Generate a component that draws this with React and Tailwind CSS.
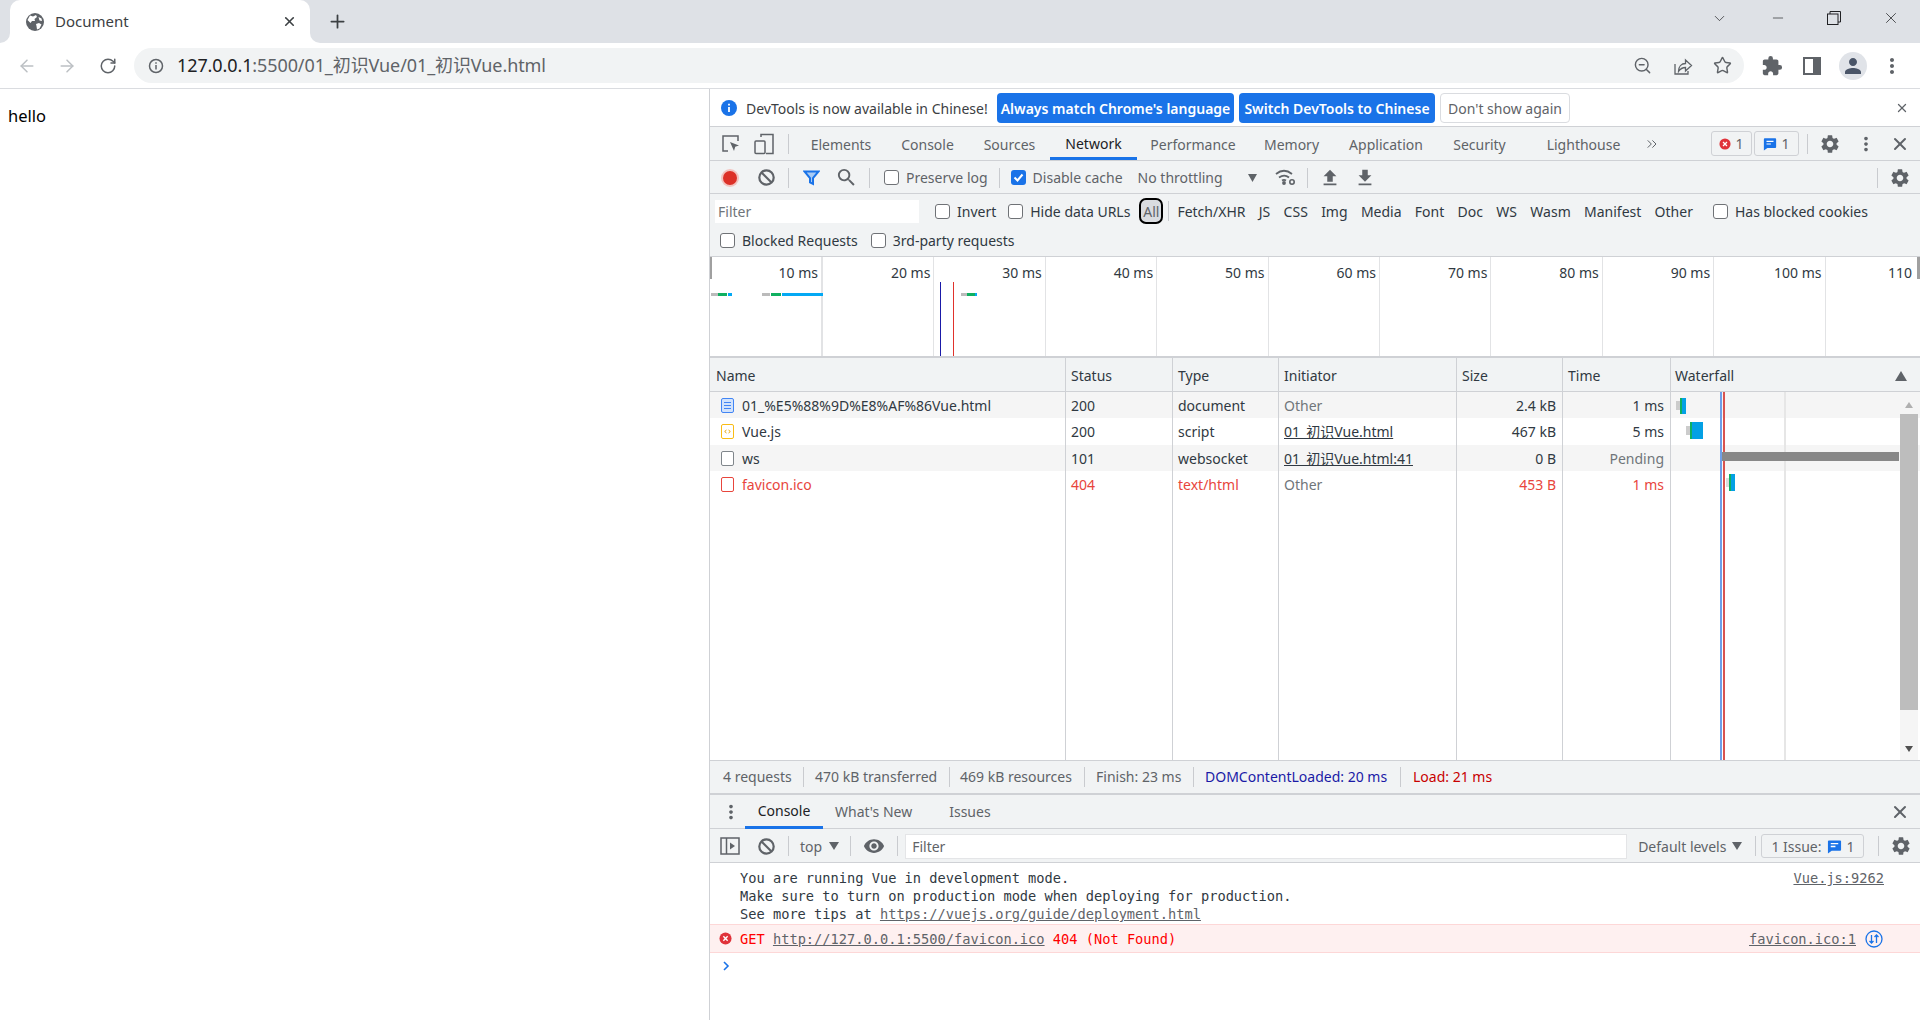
import { ArrowLeft, ArrowRight, ChevronDown, ChevronsRight, Minus, Plus, RotateCw, Star, X, ZoomOut } from "lucide-react"
import { MdExtension, MdFileDownload, MdFileUpload, MdMoreVert, MdPerson, MdSearch, MdSettings, MdVisibility } from "react-icons/md"

const Sep = ({ className = "" }) => <div className={"w-px h-[20px] bg-[#c9cbcf] shrink-0 " + className} />

const Check = ({ label, className = "", checked = false }) => (
  <label className={"flex items-center gap-[7px] shrink-0 " + className}>
    <span className={checked ? "w-[15px] h-[15px] rounded-[3px] bg-[#1a73e8] flex items-center justify-center" : "w-[15px] h-[15px] rounded-[3px] border border-[#6f7276] bg-white"}>
      {checked && (
        <svg width="13" height="13" viewBox="0 0 13 13" fill="none" stroke="white" strokeWidth="2"><path d="M2.5 6.5l3 3 5-6" /></svg>
      )}
    </span>
    <span>{label}</span>
  </label>
)

const Message = ({ size = 16 }) => (
  <svg width={size} height={size} viewBox="0 0 16 16">
    <path d="M2 1.5h12a1 1 0 0 1 1 1v9a1 1 0 0 1-1 1H5l-4 3v-13a1 1 0 0 1 1-1z" fill="#1a73e8" />
    <path d="M4 5h8M4 8h5" stroke="white" strokeWidth="1.4" />
  </svg>
)

const ErrorDot = ({ size = 14 }) => (
  <svg width={size} height={size} viewBox="0 0 14 14">
    <circle cx="7" cy="7" r="6.5" fill="#e0323a" />
    <path d="M4.7 4.7l4.6 4.6M9.3 4.7l-4.6 4.6" stroke="white" strokeWidth="1.5" />
  </svg>
)

const Clear = ({ className = "" }) => (
  <svg width="17" height="17" viewBox="0 0 17 17" fill="none" stroke="#5f6368" strokeWidth="2.200" className={className}>
    <circle cx="8.500" cy="8.500" r="7.200" />
    <path d="M3.500 3.500l10 10" />
  </svg>
)

const Globe = () => (
  <svg width="18" height="18" viewBox="0 0 18 18">
    <circle cx="9" cy="9" r="9" fill="#5f6368" />
    <path d="M4 2.5l3 1 3-1.5 1 2-2.500 2 .5 2-3 0-1.500 2-3-3zM10 11l3-1 2.500 1.500-2 4-2.500 1-.5-3.500zM12.500 4l3 1.500.5 2.500-2.500-.5z" fill="white" />
  </svg>
)

const tabs = [
  ["Elements", "w-[90px]"],
  ["Console", "w-[83px]"],
  ["Sources", "w-[81px]"],
  ["Network", "w-[87px]"],
  ["Performance", "w-[112px]"],
  ["Memory", "w-[85px]"],
  ["Application", "w-[104px]"],
  ["Security", "w-[83px]"],
  ["Lighthouse", "w-[125px]"],
]

const chips = ["Fetch/XHR", "JS", "CSS", "Img", "Media", "Font", "Doc", "WS", "Wasm", "Manifest", "Other"]
const ticks = ["20 ms", "30 ms", "40 ms", "50 ms", "60 ms", "70 ms", "80 ms", "90 ms", "100 ms"]

const rowBg = (i) => (i % 2 === 0 ? "bg-[#f5f5f5]" : "bg-white")

const columns = [
  { title: "Status", width: "w-[107px]", cells: [["200"], ["200"], ["101"], ["404", "red"]] },
  { title: "Type", width: "w-[106px]", cells: [["document"], ["script"], ["websocket"], ["text/html", "red"]] },
  { title: "Initiator", width: "w-[178px]", cells: [["Other", "gray"], ["01_初识Vue.html", "link"], ["01_初识Vue.html:41", "link"], ["Other", "gray"]] },
  { title: "Size", width: "w-[106px]", right: true, cells: [["2.4 kB"], ["467 kB"], ["0 B"], ["453 B", "red"]] },
  { title: "Time", width: "w-[108px]", right: true, cells: [["1 ms"], ["5 ms"], ["Pending", "gray"], ["1 ms", "red"]] },
]

const cellTone = {
  red: "text-[#e8453c]",
  gray: "text-[#70757a]",
  link: "text-[#303942] underline",
}

const FileIcon = ({ kind }) => {
  if (kind === "doc")
    return (
      <svg width="13" height="15" viewBox="0 0 13 15" className="shrink-0">
        <rect x="0.5" y="0.5" width="12" height="14" rx="1.500" fill="#d2e3fc" stroke="#4285f4" />
        <path d="M3 4.500h7M3 7.500h7M3 10.500h7" stroke="#4285f4" strokeWidth="1.200" />
      </svg>
    )
  if (kind === "js")
    return (
      <svg width="13" height="15" viewBox="0 0 13 15" className="shrink-0">
        <rect x="0.5" y="0.5" width="12" height="14" rx="1.500" fill="white" stroke="#f9bc15" />
        <path d="M5.500 6l-1.800 1.500L5.500 9M7.500 6l1.800 1.500L7.500 9" stroke="#e8a500" fill="none" />
      </svg>
    )
  return (
    <svg width="13" height="15" viewBox="0 0 13 15" className="shrink-0">
      <rect x="0.5" y="0.5" width="12" height="14" rx="1.500" fill="white" stroke={kind === "err" ? "#e8453c" : "#80868b"} />
    </svg>
  )
}

const nameRows = [
  { name: "01_%E5%88%9D%E8%AF%86Vue.html", kind: "doc" },
  { name: "Vue.js", kind: "js" },
  { name: "ws", kind: "plain" },
  { name: "favicon.ico", kind: "err" },
]

const Browser = () => (
  <div>
    <div className="h-[43px] bg-[#dee1e6] flex items-end pl-[10px] relative">
      <div className="relative w-[300px] h-[43px] bg-white rounded-t-[10px] flex items-center pl-[16px] pr-[13px] text-[15px] text-[#3c4043]">
        <div className="absolute -left-[10px] bottom-0 w-[10px] h-[10px] bg-white"><div className="size-full bg-[#dee1e6] rounded-br-[10px]" /></div>
        <div className="absolute -right-[10px] bottom-0 w-[10px] h-[10px] bg-white"><div className="size-full bg-[#dee1e6] rounded-bl-[10px]" /></div>
        <Globe />
        <span className="ml-[11px] flex-1">Document</span>
        <X size={15} strokeWidth={2.6} className="text-[#3c4043]" />
      </div>
      <Plus size={21} strokeWidth={2} className="ml-[17px] mb-[11px] text-[#3c4043]" />
      <div className="ml-auto flex items-center h-[36px] self-start text-[#202124]">
        <ChevronDown size={17} strokeWidth={1} className="mr-[42px]" />
        <Minus size={16} strokeWidth={1} className="mr-[41px]" />
        <svg width="14" height="14" viewBox="0 0 14 14" fill="none" stroke="#202124" className="mr-[41px]">
          <rect x="0.5" y="3" width="10.500" height="10.500" />
          <path d="M3 3V.5h10.500V11H11" />
        </svg>
        <X size={18} strokeWidth={1} className="mr-[20px]" />
      </div>
    </div>
    <div className="h-[46px] bg-white border-b border-[#dadce0] flex items-center text-[#5f6368]">
      <ArrowLeft size={20} strokeWidth={1.800} className="ml-[17px] text-[#bcc0c4]" />
      <ArrowRight size={20} strokeWidth={1.800} className="ml-[20px] text-[#bcc0c4]" />
      <RotateCw size={18} strokeWidth={2} className="ml-[22px] text-[#5f6368]" />
      <div className="ml-[17px] w-[1610px] h-[35px] rounded-full bg-[#f1f3f4] flex items-center pl-[14px] relative">
        <svg width="16" height="16" viewBox="0 0 16 16" fill="none" stroke="#5f6368" strokeWidth="1.500">
          <circle cx="8" cy="8" r="6.500" />
          <path d="M8 7v4.500M8 4.200v1.600" />
        </svg>
        <span className="ml-[13px] text-[18px] text-[#5f6368] tracking-[-0.1px]">
          <span className="text-[#202124]">127.0.0.1</span>:5500/01_初识Vue/01_初识Vue.html
        </span>
        <ZoomOut size={19} strokeWidth={1.800} className="ml-auto" />
        <svg width="20" height="20" viewBox="0 0 20 20" fill="none" stroke="#5f6368" strokeWidth="1.300" className="ml-[21px]">
          <path d="M2 8v10h13v-3" />
          <path d="M5.500 15.500c0-5 3-8 7-8V4l6 5.500-6 5.500v-3.500c-3 0-5 1-7 4z" />
        </svg>
        <Star size={19} strokeWidth={1.800} className="ml-[20px] mr-[12px]" />
      </div>
      <MdExtension size={22} className="ml-[17px]" />
      <svg width="18" height="18" viewBox="0 0 18 18" className="ml-[20px]">
        <path fillRule="evenodd" d="M0 0h18v18H0zM2 2v14h8V2z" fill="#5f6368" />
      </svg>
      <div className="ml-[18px] w-[28px] h-[28px] rounded-full bg-[#e0e3e8] flex items-center justify-center"><MdPerson size={24} className="text-[#4a5568]" /></div>
      <MdMoreVert size={24} className="ml-[13px]" />
    </div>
  </div>
)

const Overview = () => (
  <div className="h-[101px] border-b-2 border-[#cfd1d5] flex relative bg-white text-[14px] text-[#303942]">
    <div className="w-[113px] border-r-2 border-[#e2e3e5] pr-[3px] pt-[5px] text-right">10 ms</div>
    {ticks.map((t) => (
      <div key={t} className="w-[111.400px] border-r border-[#e2e3e5] pr-[3px] pt-[5px] text-right">{t}</div>
    ))}
    <div className="flex-1 pr-[8px] pt-[5px] text-right">110</div>
    <div className="absolute left-0 top-0 w-[2px] h-[22px] bg-[#a0a0a0]" />
    <div className="absolute right-0 top-0 w-[3px] h-[22px] bg-[#a0a0a0]" />
    <div className="absolute left-[1px] top-[36px] w-[7px] h-[3px] bg-[#bbb]" />
    <div className="absolute left-[8px] top-[36px] w-[9px] h-[3px] bg-[#0fb060]" />
    <div className="absolute left-[18px] top-[36px] w-[4px] h-[3px] bg-[#03a9f4]" />
    <div className="absolute left-[52px] top-[36px] w-[8px] h-[3px] bg-[#bbb]" />
    <div className="absolute left-[61px] top-[36px] w-[10px] h-[3px] bg-[#0fb060]" />
    <div className="absolute left-[72px] top-[36px] w-[41px] h-[3px] bg-[#03a9f4]" />
    <div className="absolute left-[251px] top-[36px] w-[6px] h-[3px] bg-[#bbb]" />
    <div className="absolute left-[257px] top-[36px] w-[8px] h-[3px] bg-[#0fb060]" />
    <div className="absolute left-[265px] top-[36px] w-[2px] h-[3px] bg-[#03a9f4]" />
    <div className="absolute left-[230px] top-[25px] bottom-0 w-px bg-[#1a1aa8]" />
    <div className="absolute left-[243px] top-[25px] bottom-0 w-px bg-[#e0322c]" />
  </div>
)

const HeaderCell = ({ children, className = "" }) => (
  <div className={"h-[34px] bg-[#f1f3f4] border-b border-[#cfd1d5] flex items-center pt-[2px] text-[#303942] " + className}>{children}</div>
)

const Table = () => (
  <div className="flex-1 flex min-h-0 bg-white text-[14px] text-[#303942]">
    <div className="w-[356px] border-r border-[#cfd1d5]">
      <HeaderCell className="px-[6px]">Name</HeaderCell>
      {nameRows.map((r, i) => (
        <div key={r.name} className={"h-[26.250px] flex items-center pl-[11px] pt-[1px] " + rowBg(i) + (r.kind === "err" ? " text-[#e8453c]" : "")}>
          <FileIcon kind={r.kind} />
          <span className="ml-[8px]">{r.name}</span>
        </div>
      ))}
    </div>
    {columns.map((c) => (
      <div key={c.title} className={c.width + " border-r border-[#cfd1d5]"}>
        <HeaderCell className="px-[5px]">{c.title}</HeaderCell>
        {c.cells.map(([text, tone], i) => (
          <div key={i} className={"h-[26.250px] flex items-center pt-[1px] whitespace-nowrap " + rowBg(i) + (c.right ? " justify-end pr-[6px] " : " pl-[5px] ") + (cellTone[tone] || "")}>{text}</div>
        ))}
      </div>
    ))}
    <div className="flex-1 relative">
      <HeaderCell className="pl-[4px]">
        Waterfall
        <svg width="12" height="10" viewBox="0 0 12 10" className="ml-auto mr-[13px]"><path d="M6 0l6 10H0z" fill="#5f6368" /></svg>
      </HeaderCell>
      {nameRows.map((r, i) => (
        <div key={r.name} className={"h-[26.250px] " + rowBg(i)} />
      ))}
      <div className="absolute left-[113px] top-[34px] bottom-0 w-[2px] bg-[#e6e6e6]" />
      <div className="absolute left-[49px] top-[34px] bottom-0 w-[2px] bg-[#6f9fe8]" />
      <div className="absolute left-[52px] top-[34px] bottom-0 w-[2px] bg-[#d9534f]" />

      <div className="absolute left-[5px] top-[43px] w-[4px] h-[9px] bg-[#ccc]" />
      <div className="absolute left-[9px] top-[40px] w-[2px] h-[16px] bg-[#0fb060]" />
      <div className="absolute left-[11px] top-[40px] w-[4px] h-[16px] bg-[#03a0e4]" />

      <div className="absolute left-[15px] top-[68px] w-[4px] h-[9px] bg-[#ccc]" />
      <div className="absolute left-[19px] top-[64px] w-[2px] h-[17px] bg-[#0fb060]" />
      <div className="absolute left-[21px] top-[64px] w-[11px] h-[17px] bg-[#03a0e4]" />

      <div className="absolute left-[51px] top-[94px] w-[177px] h-[9px] bg-[#888]" />

      <div className="absolute left-[55px] top-[120px] w-[4px] h-[9px] bg-[#ddd]" />
      <div className="absolute left-[58px] top-[116px] w-[2px] h-[17px] bg-[#0fb060]" />
      <div className="absolute left-[60px] top-[116px] w-[4px] h-[17px] bg-[#03a0e4]" />

      <div className="absolute right-[2px] top-[34px] bottom-0 w-[18px] bg-[#f5f5f5] flex flex-col items-center">
        <svg width="8" height="6" viewBox="0 0 8 6" className="mt-[10px]"><path d="M4 0l4 6H0z" fill="#b0b0b0" /></svg>
        <div className="mt-[6px] w-[18px] h-[296px] bg-[#bdbdbd]" />
        <svg width="8" height="6" viewBox="0 0 8 6" className="mt-auto mb-[8px]"><path d="M0 0h8L4 6z" fill="#505050" /></svg>
      </div>
    </div>
  </div>
)

const Status = () => (
  <div className="h-[35px] bg-[#f1f3f4] border-t border-b-2 border-[#cfd1d5] flex items-center pl-[13px] text-[14px] text-[#5f6368] whitespace-nowrap">
    <span className="w-[80px] -mt-[2px]">4 requests</span>
    <Sep />
    <span className="w-[145px] pl-[11px] -mt-[2px]">470 kB transferred</span>
    <Sep />
    <span className="w-[134px] pl-[10px] -mt-[2px]">469 kB resources</span>
    <Sep />
    <span className="w-[108px] pl-[11px] -mt-[2px]">Finish: 23 ms</span>
    <Sep />
    <span className="w-[206px] pl-[11px] -mt-[2px] text-[#1a1aa6]">DOMContentLoaded: 20 ms</span>
    <Sep />
    <span className="pl-[12px] -mt-[2px] text-[#c80000]">Load: 21 ms</span>
  </div>
)

const Drawer = () => (
  <div className="h-[225px] flex flex-col shrink-0">
    <div className="h-[34px] bg-[#f1f3f4] border-b border-[#cfd1d5] flex items-center text-[14px] text-[#5f6368]">
      <MdMoreVert size={22} className="ml-[10px]" />
      <div className="ml-[3px] w-[78px] h-[34px] pt-[1px] border-b-[3px] border-[#1a73e8] text-[#202124] flex items-center justify-center">Console</div>
      <span className="ml-[12px]">What's New</span>
      <span className="ml-[37px]">Issues</span>
      <X size={20} strokeWidth={2.400} className="ml-auto mr-[10px]" />
    </div>
    <div className="h-[34px] bg-[#f1f3f4] border-b border-[#cfd1d5] flex items-center pt-[1px] text-[14px] text-[#5f6368]">
      <svg width="20" height="18" viewBox="0 0 20 18" fill="none" stroke="#5f6368" strokeWidth="1.500" className="ml-[10px]">
        <rect x="1" y="1" width="18" height="16" />
        <path d="M6.500 1v16" />
        <path d="M10 5.500l5 3.500-5 3.500z" fill="#5f6368" stroke="none" />
      </svg>
      <Clear className="ml-[18px]" />
      <Sep className="ml-[13px]" />
      <span className="ml-[11px]">top</span>
      <svg width="10" height="8" viewBox="0 0 10 8" className="ml-[7px]"><path d="M0 0h10L5 8z" fill="#5f6368" /></svg>
      <Sep className="ml-[11px]" />
      <MdVisibility size={22} className="ml-[12px]" />
      <Sep className="ml-[12px]" />
      <div className="ml-[7px] w-[722px] h-[25px] bg-white border border-[#e4e5e7] flex items-center pl-[6px] text-[#5f6368]">Filter</div>
      <span className="ml-[11px]">Default levels</span>
      <svg width="10" height="8" viewBox="0 0 10 8" className="ml-[6px]"><path d="M0 0h10L5 8z" fill="#5f6368" /></svg>
      <Sep className="ml-[13px]" />
      <div className="ml-[5px] w-[103px] h-[24px] rounded-[3px] border border-[#cfd1d5] flex items-center justify-center gap-[5px]">
        1 Issue: <Message size={15} /> 1
      </div>
      <Sep className="ml-[14px]" />
      <MdSettings size={22} className="ml-[11px]" />
    </div>
    <div className="flex-1 bg-white font-['DejaVu_Sans_Mono',monospace] text-[13.680px] leading-[18px] text-[#303942]">
      <div className="flex pl-[30px] pr-[36px] pt-[6px] h-[61px]">
        <div>
          <div>You are running Vue in development mode.</div>
          <div>Make sure to turn on production mode when deploying for production.</div>
          <div>See more tips at <span className="underline text-[#5f6368]">https://vuejs.org/guide/deployment.html</span></div>
        </div>
        <span className="ml-auto underline text-[#5f6368]">Vue.js:9262</span>
      </div>
      <div className="h-[29px] bg-[#fef0f0] border-y border-[#fdd7d7] flex items-center text-[#f00] pl-[9px] pr-[37px]">
        <ErrorDot size={13} />
        <span className="ml-[8px]">GET <span className="underline text-[#5f6368]">http://127.0.0.1:5500/favicon.ico</span> 404 (Not Found)</span>
        <span className="ml-auto underline text-[#5f6368]">favicon.ico:1</span>
        <svg width="18" height="18" viewBox="0 0 18 18" fill="none" stroke="#1a73e8" strokeWidth="1.300" className="ml-[9px]">
          <circle cx="9" cy="9" r="8" />
          <path d="M6.500 5v8M4.500 11l2 2 2-2M11.500 13V5M9.500 7l2-2 2 2" />
        </svg>
      </div>
      <svg width="8" height="10" viewBox="0 0 8 10" fill="none" stroke="#1a73e8" strokeWidth="1.600" className="ml-[12px] mt-[8px]"><path d="M2 1l4 4-4 4" /></svg>
    </div>
  </div>
)

const DevTools = () => (
  <div className="flex-1 min-w-0 border-l border-[#cfd1d5] flex flex-col text-[14px] text-[#303942]">
    <div className="h-[38px] bg-white border-b border-[#cfd1d5] flex items-center pl-[11px] pt-[1px] text-[14px]">
      <svg width="16" height="16" viewBox="0 0 16 16" className="shrink-0">
        <circle cx="8" cy="8" r="8" fill="#1a73e8" />
        <path d="M8 7v5M8 3.800v1.700" stroke="white" strokeWidth="1.800" />
      </svg>
      <span className="ml-[9px] w-[251px] whitespace-nowrap text-[#3c4043]">DevTools is now available in Chinese!</span>
      <button className="w-[237px] h-[30px] rounded-[4px] bg-[#1a73e8] text-white font-semibold whitespace-nowrap">Always match Chrome's language</button>
      <button className="ml-[5px] w-[196px] h-[30px] rounded-[4px] bg-[#1a73e8] text-white font-semibold whitespace-nowrap">Switch DevTools to Chinese</button>
      <button className="ml-[5px] w-[130px] h-[30px] rounded-[4px] border border-[#dadce0] text-[#5f6368] whitespace-nowrap">Don't show again</button>
      <X size={14} strokeWidth={2.200} className="ml-auto mr-[11px] text-[#5f6368]" />
    </div>

    <div className="h-[34px] bg-[#f1f3f4] border-b border-[#cfd1d5] flex items-center text-[#5f6368]">
      <svg width="20" height="20" viewBox="0 0 20 20" fill="none" stroke="#5f6368" strokeWidth="1.500" className="ml-[11px]">
        <path d="M7 17H2V2h15v5" />
        <path d="M9 8l9 3.500-3.800 1.300L13 17z" fill="#5f6368" stroke="none" />
      </svg>
      <svg width="20" height="22" viewBox="0 0 20 22" fill="none" stroke="#5f6368" strokeWidth="1.500" className="ml-[13px]">
        <path d="M7 4V1.500h12v19H12" />
        <rect x="1" y="8" width="10" height="12.500" rx="1" />
      </svg>
      <Sep className="ml-[14px] mr-[7px]" />
      {tabs.map(([t, w]) => (
        <div key={t} className={w + " h-[33px] pt-[2px] flex items-center justify-center whitespace-nowrap " + (t === "Network" ? "border-b-[3px] border-[#1a73e8] text-[#202124]" : "")}>{t}</div>
      ))}
      <ChevronsRight size={16} strokeWidth={1.500} className="-ml-[2px]" />
      <div className="ml-[51px] w-[41px] h-[25px] rounded-[3px] border border-[#cfd1d5] flex items-center justify-center gap-[4px]"><ErrorDot size={12} /> 1</div>
      <div className="ml-[2px] w-[45px] h-[25px] rounded-[3px] border border-[#cfd1d5] flex items-center justify-center gap-[4px]"><Message size={14} /> 1</div>
      <Sep className="ml-[8px]" />
      <MdSettings size={22} className="ml-[11px]" />
      <MdMoreVert size={22} className="ml-[14px]" />
      <X size={20} strokeWidth={2.400} className="ml-[13px]" />
    </div>

    <div className="h-[33px] bg-[#f1f3f4] border-b border-[#cfd1d5] flex items-center pt-[1px] text-[#5f6368]">
      <div className="ml-[13px] w-[14px] h-[14px] rounded-full bg-[#dc3128] ring-2 ring-[#f3c4c0]" />
      <Clear className="ml-[21px]" />
      <Sep className="ml-[13px]" />
      <svg width="17" height="16" viewBox="0 0 17 16" fill="none" stroke="#1a73e8" strokeWidth="2" className="ml-[14px]"><path d="M1.500 1.500h14L10 8v6l-3-1.500V8z" fill="#a8cbf5" /></svg>
      <MdSearch size={23} className="ml-[15px]" />
      <Sep className="ml-[11px]" />
      <Check label="Preserve log" className="ml-[14px]" />
      <Sep className="ml-[11px]" />
      <Check label="Disable cache" checked className="ml-[11px]" />
      <span className="ml-[15px] w-[110px]">No throttling</span>
      <svg width="9" height="8" viewBox="0 0 9 8"><path d="M0 0h9L4.500 8z" fill="#5f6368" /></svg>
      <svg width="21" height="18" viewBox="0 0 21 18" fill="none" stroke="#5f6368" strokeWidth="1.800" className="ml-[18px]">
        <path d="M1 5c5-4 11-4 16 0M4 8.500c3.500-2.500 7-2.500 10 0M7 11.500c1.500-1 2.500-1 4 0" />
        <circle cx="9" cy="14" r="1" fill="#5f6368" />
        <circle cx="17" cy="13" r="2.200" strokeWidth="1.600" />
      </svg>
      <Sep className="ml-[11px]" />
      <MdFileUpload size={22} className="ml-[11px]" />
      <MdFileDownload size={22} className="ml-[13px]" />
      <Sep className="ml-auto" />
      <MdSettings size={22} className="ml-[11px] mr-[9px]" />
    </div>

    <div className="h-[63px] bg-[#f1f3f4] border-b border-[#cfd1d5] text-[#303942] flex flex-col">
      <div className="h-[34px] flex items-center pl-[5px]">
        <div className="w-[204px] h-[23px] bg-white flex items-center pl-[3px] text-[#70757a]">Filter</div>
        <Check label="Invert" className="ml-[16px]" />
        <Check label="Hide data URLs" className="ml-[12px]" />
        <div className="ml-[9px] w-[24px] h-[26px] rounded-[7px] border-2 border-black bg-[#dadce0] flex items-center justify-center text-[#5f6368]">All</div>
        <Sep className="ml-[5px] mr-[4px]" />
        <div className="flex gap-[13.300px] ml-[4px] text-[#303942]">
          {chips.map((c) => (
            <span key={c}>{c}</span>
          ))}
        </div>
        <Check label="Has blocked cookies" className="ml-[20px]" />
      </div>
      <div className="flex items-center pl-[10px] mt-[2px]">
        <Check label="Blocked Requests" />
        <Check label="3rd-party requests" className="ml-[13px]" />
      </div>
    </div>

    <Overview />
    <Table />
    <Status />
    <Drawer />
  </div>
)

const App = () => {
  return (
    <div className="h-screen w-full overflow-hidden flex flex-col bg-white font-['Noto_Sans','Noto_Sans_CJK_SC',sans-serif]">
      <Browser />
      <div className="flex-1 flex min-h-0">
        <div className="w-[709px] shrink-0 pl-[8px] pt-[15px] text-[16.500px] text-black">hello</div>
        <DevTools />
      </div>
    </div>
  )
}

export default App
